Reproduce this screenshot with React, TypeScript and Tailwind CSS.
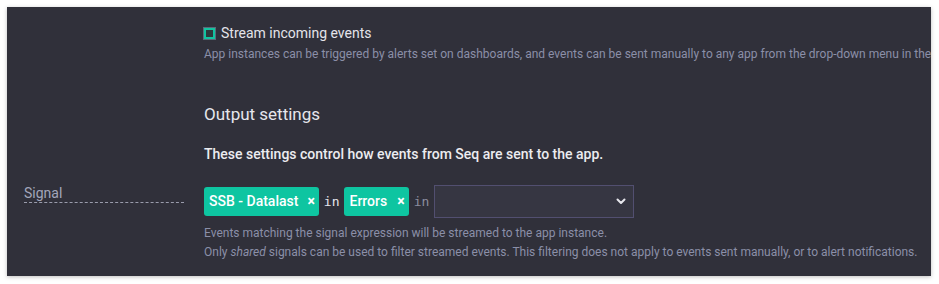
export default function App() {
  return (
    <div className="min-h-screen bg-white p-[7px] font-['Roboto',sans-serif]">
      <div className="w-[924px] h-[269px] overflow-hidden bg-[#30303a] shadow-[0_1px_4px_rgba(0,0,0,0.25)] pl-[17px] pt-4 pb-[14px]">
        <div className="flex gap-5">
          <div className="w-[160px] shrink-0" />
          <div className="min-w-0 flex-1">
            <label className="flex items-center h-5 gap-[6px] text-[14px] text-[#e4e4ea]">
              <span className="w-[11px] h-[11px] bg-[#12c4a0] p-[2px] flex outline outline-1 outline-[#5a6a78]">
                <span className="flex-1 bg-[#2c3a3c]" />
              </span>
              Stream incoming events
            </label>
            <p className="mt-[2px] text-[12px] leading-[18px] text-[#8b8fa8] whitespace-nowrap">
              App instances can be triggered by alerts set on dashboards, and events can be sent manually to any app from the drop-down menu in the
            </p>

            <h2 className="mt-[39px] text-[17px] leading-6 text-[#e6e6ec]">Output settings</h2>
            <p className="mt-[18px] text-[14px] leading-5 font-medium text-[#ececf0]">
              These settings control how events from Seq are sent to the app.
            </p>
          </div>
        </div>

        <div className="flex gap-5 mt-[21px]">
          <div className="w-[160px] shrink-0 -mt-[1px]">
            <div className="text-[14px] leading-[18px] text-[#a3a6ba] border-b border-dashed border-[#9a9cac]">
              Signal
            </div>
          </div>
          <div className="min-w-0 flex-1">
            <div className="flex items-center h-[33px]">
              <span className="flex items-center h-[29px] rounded-[3px] bg-[#0ec5a1] pl-[5px] pr-[4px] text-[14px] font-medium text-white">
                SSB - Datalast
                <span className="ml-[9px] text-[14px] font-bold">×</span>
              </span>
              <span className="mx-[5px] font-['DejaVu_Sans_Mono',monospace] text-[13px] text-[#e6e6ec]">in</span>
              <span className="flex items-center h-[29px] rounded-[3px] bg-[#0ec5a1] pl-[5px] pr-[4px] text-[14px] font-medium text-white">
                Errors
                <span className="ml-[10px] text-[14px] font-bold">×</span>
              </span>
              <span className="ml-[5px] mr-[5px] font-['DejaVu_Sans_Mono',monospace] text-[13px] text-[#8b8d9e]">in</span>
              <div className="w-[200px] h-[33px] bg-[#363642] border border-[#524f70] flex items-center justify-end pr-[7px]">
                <svg width="10" height="7" viewBox="0 0 10 7" fill="none">
                  <path d="M1.5 1.5L5 5L8.5 1.5" stroke="#e6e6ec" strokeWidth="2" strokeLinecap="round" strokeLinejoin="round" />
                </svg>
              </div>
            </div>
            <p className="mt-[6px] text-[12px] leading-[19px] text-[#8b8fa8]">
              Events matching the signal expression will be streamed to the app instance.
            </p>
            <p className="text-[12px] leading-[19px] text-[#8b8fa8]">
              Only <em>shared</em> signals can be used to filter streamed events. This filtering does not apply to events sent manually, or to alert notifications.
            </p>
          </div>
        </div>
      </div>
    </div>
  )
}
